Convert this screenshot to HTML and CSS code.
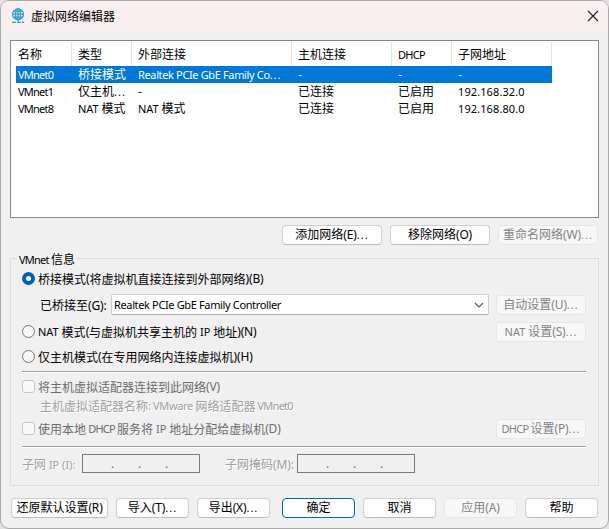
FILE: index.html
```html
<!DOCTYPE html>
<html lang="zh-CN">
<head>
<meta charset="utf-8">
<title>虚拟网络编辑器</title>
<link rel="stylesheet" href="styles.css">
</head>
<body>
<div class="window">
  <header class="titlebar">
    <svg class="logo" width="14" height="16" viewBox="0 0 14 16" fill="none" stroke="#2b9fd0" stroke-width="1.3">
      <circle cx="7" cy="6.2" r="5.4"/><ellipse cx="7" cy="6.2" rx="2.5" ry="5.4"/>
      <path d="M7 .5v13M1.5 6.2h11M2.5 3.3h9M2.5 9.1h9"/><path d="M1 14.3h12" stroke="#25a78c" stroke-dasharray="4 1"/>
    </svg>
    <h1>虚拟网络编辑器</h1>
    <svg class="close" width="12" height="12" viewBox="0 0 12 12" stroke="#222" stroke-width="1.1"><path d="M1 1l10 10M11 1L1 11"/></svg>
  </header>
  <main>
    <div class="list">
      <div class="row head"><span>名称</span><span>类型</span><span>外部连接</span><span>主机连接</span><span><i class="vm">DHCP</i></span><span>子网地址</span></div>
      <div class="row selected"><span><i class="vm">VMnet0</i></span><span>桥接模式</span><span><i class="en">Realtek PCIe GbE Family Co</i><i class="dots">...</i></span><span>-</span><span>-</span><span>-</span></div>
      <div class="row"><span><i class="vm">VMnet1</i></span><span>仅主机<i class="dots">...</i></span><span>-</span><span>已连接</span><span>已启用</span><span><i class="num">192.168.32.0</i></span></div>
      <div class="row"><span><i class="vm">VMnet8</i></span><span><i>NAT </i>模式</span><span><i>NAT </i>模式</span><span>已连接</span><span>已启用</span><span><i class="num">192.168.80.0</i></span></div>
    </div>
    <div class="actions">
      <button>添加网络<i class="key">(E)</i><i class="dots">...</i></button><button>移除网络<i class="key">(O)</i></button><button disabled>重命名网络<i class="key">(W)</i><i class="dots">...</i></button>
    </div>
    <section class="group">
      <h2><i class="vm">VMnet </i>信息</h2>
      <div class="line bridge"><span class="radio on"></span>桥接模式<i class="key">(</i>将虚拟机直接连接到外部网络<i class="key">)(B)</i></div>
      <div class="line adapter"><label>已桥接至<i class="key">(G):</i></label>
        <div class="combo"><i class="en">Realtek PCIe GbE Family Controller</i><svg width="10" height="6" viewBox="0 0 10 6" fill="none" stroke="#555" stroke-width="1.1"><path d="M1 1l4 4 4-4"/></svg></div>
        <button disabled>自动设置<i class="key">(U)</i><i class="dots">...</i></button></div>
      <div class="line nat"><span class="radio"></span><i>NAT </i>模式<i class="key">(</i>与虚拟机共享主机的<i> IP </i>地址<i class="key">)(N)</i><button disabled><i>NAT </i>设置<i class="key">(S)</i><i class="dots">...</i></button></div>
      <div class="line host"><span class="radio"></span>仅主机模式<i class="key">(</i>在专用网络内连接虚拟机<i class="key">)(H)</i></div>
      <hr>
      <div class="line connect muted"><span class="check"></span>将主机虚拟适配器连接到此网络<i class="key">(V)</i></div>
      <div class="line name faint">主机虚拟适配器名称<i class="en">: VMware </i>网络适配器<i class="vm"> VMnet0</i></div>
      <div class="line dhcp muted"><span class="check"></span>使用本地<i class="vm"> DHCP </i>服务将<i> IP </i>地址分配给虚拟机<i class="key">(D)</i><button disabled><i class="vm">DHCP </i>设置<i class="key">(P)</i><i class="dots">...</i></button></div>
      <hr>
      <div class="line subnet faint">
        <label class="ip-label">子网<i> IP (I):</i></label><div class="ip"><b>.</b><b>.</b><b>.</b></div>
        <label class="mask-label">子网掩码<i class="key">(M):</i></label><div class="ip"><b>.</b><b>.</b><b>.</b></div>
      </div>
    </section>
    <footer>
      <button class="reset">还原默认设置<i class="key">(R)</i></button><button>导入<i class="key">(T)</i><i class="dots">...</i></button><button>导出<i class="key">(X)</i><i class="dots">...</i></button>
      <button class="ok">确定</button><button>取消</button><button disabled>应用<i class="key">(A)</i></button><button>帮助</button>
    </footer>
  </main>
</div>
</body>
</html>
```
FILE: styles.css
```css
* { box-sizing: border-box; }
body { margin: 0; background: #e2e2e3; color: #000; font: 12px/17px "Noto Sans CJK SC", sans-serif; }
i { font: normal 11px/15px "Noto Sans", sans-serif; white-space: pre; }
.en { letter-spacing: -.36px; }
.vm { letter-spacing: -.75px; }
.key { font-size: 12px; letter-spacing: -.15px; }
.dots { letter-spacing: 1px; }
.num { letter-spacing: .1px; }
.window { width: 609px; height: 529px; background: #f0f0f0; border: 1px solid #aaa; border-radius: 9px; overflow: hidden; }
.titlebar { display: flex; align-items: center; height: 30px; background: #f9eff0; padding: 0 9px 1px 10px; }
h1 { flex: 1; margin: 0 0 1px 6px; font-size: 12px; font-weight: 400; }
main { padding: 9px 9px 0; }
.list { height: 178px; background: #fff; border: 1px solid #828790; padding: 1px 5px; }
.row { display: grid; grid-template-columns: 56px 60px 160px 100px 60px 100px; width: 536px; height: 17px; }
.row span { padding-left: 6px; line-height: 16px; white-space: nowrap; overflow: hidden; }
.row span:first-child { padding-left: 2px; }
.head { height: 24px; }
.row.head span { line-height: 23px; border-right: 1px solid #e2e2e2; }
.selected { background: #0078d7; color: #fff; }
button { height: 20px; padding: 0 0 2px; font: inherit; line-height: 16px; color: #000; background: #fdfdfd; border: 1px solid #d0d0d0; border-bottom-color: #bcbcbc; border-radius: 4px; white-space: nowrap; }
button:disabled { color: #838383; background: #f7f7f7; border-color: #e6e6e6; }
.actions { display: flex; justify-content: flex-end; gap: 8px; margin: 7px 1px 0 0; }
.actions button { width: 100px; }
.group { height: 228px; margin-top: 13px; border: 1px solid #dcdcdc; padding: 0 12px 0 11px; }
h2 { width: max-content; height: 17px; margin: -8px 0 0 -5px; padding: 0 2px; background: #f0f0f0; font-size: 12px; line-height: 15px; font-weight: 400; }
.line { display: flex; align-items: center; height: 20px; line-height: 17px; padding-bottom: 1px; white-space: nowrap; }
.line > button { width: 90px; margin: 0 0 -1px auto; }
.radio, .check { flex: none; width: 13px; height: 13px; margin-right: 3px; border: 1px solid #777; background: #f6f6f6; }
.radio { border-radius: 50%; }
.radio.on { border: 4px solid #005fb8; background: #fff; }
.check { border-color: #c5c5c5; border-radius: 3px; background: #f9f9f9; }
.bridge { margin-top: 1px; }
.adapter { height: 21px; margin-top: 5px; padding-left: 18px; }
.adapter label { width: 71px; }
.combo { display: flex; align-items: center; justify-content: space-between; width: 378px; height: 21px; margin-bottom: -1px; padding: 0 4px 0 2px; background: #fff; border: 1px solid #ccc; border-bottom-color: #aaa; border-radius: 2px; }
.nat { margin-top: 7px; }
.host { margin-top: 5px; }
hr { height: 2px; margin: 4px 0 0; border: 0; border-top: 1px solid #a0a0a0; background: #fff; }
.connect { margin-top: 4px; }
.muted { color: #6d6d6d; }
.faint { color: #a0a0a0; text-shadow: 1px 1px #fff; }
.name { height: 18px; padding-left: 18px; }
.dhcp { margin-top: 4px; }
.dhcp + hr { margin-top: 7px; }
.subnet { margin-top: 6px; }
.ip-label { width: 60px; }
.mask-label { width: 72px; margin-left: 25px; }
.ip { display: flex; width: 118px; height: 19px; padding-left: 28px; border: 1px solid #7a7a7a; color: #6d6d6d; text-shadow: none; }
.ip b { width: 27px; font: 12px/17px "Noto Sans", sans-serif; }
footer { display: flex; gap: 8px; margin: 12px 0 0 1px; }
footer button { width: 73px; }
footer .reset { width: 97px; }
.ok { margin-left: 4px; border-color: #0067c0; }
```
